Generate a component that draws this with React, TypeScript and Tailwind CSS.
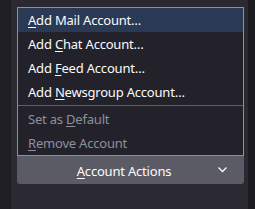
const items = [
  { pre: '', key: 'A', post: 'dd Mail Account…', active: true },
  { pre: 'Add ', key: 'C', post: 'hat Account…' },
  { pre: 'Add ', key: 'F', post: 'eed Account…' },
  { pre: 'Add ', key: 'N', post: 'ewsgroup Account…' },
];

const disabled = [
  { pre: 'Set as ', key: 'D', post: 'efault' },
  { pre: '', key: 'R', post: 'emove Account' },
];

function Label({ pre, k, post }: { pre: string; k: string; post: string }) {
  return (
    <span className="tracking-[-0.2px]">
      {pre}
      <span className="underline underline-offset-2">{k}</span>
      {post}
    </span>
  );
}

export default function App() {
  return (
    <div className="flex h-[209px] w-[255px] bg-[#1c1b22] text-[13px] font-['Noto_Sans',sans-serif] leading-none">
      <div className="w-[11px] shrink-0 bg-[#1f1e25]" />
      <div className="flex w-[237px] flex-col bg-[#2b2a33] pl-[6px] pr-[4px] pt-[7px]">
        <div className="border border-[#8f8f9d] bg-[#23222b]">
          {items.map((it, i) => (
            <div
              key={i}
              className={`flex h-[24px] items-center pl-[10px] text-[#fbfbfe] ${it.active ? 'bg-[#2a3a55]' : ''}`}
            >
              <Label pre={it.pre} k={it.key} post={it.post} />
            </div>
          ))}
          <div className="my-[1px] h-px bg-[#5f5e68]" />
          {disabled.map((it, i) => (
            <div key={i} className="flex h-[24px] items-center pl-[10px] text-[#8f8f9d]">
              <Label pre={it.pre} k={it.key} post={it.post} />
            </div>
          ))}
        </div>
        <button className="relative flex h-[28px] items-center justify-center rounded-b-[3px] bg-[#5b5b66] pr-[13px] pt-[2px] text-[#fbfbfe]">
          <span className="tracking-[-0.2px]">
            <span className="underline underline-offset-2">A</span>ccount Actions
          </span>
          <svg className="absolute right-[17px] top-[11px]" width="9" height="6" viewBox="0 0 9 6" fill="none">
            <path d="M0.5 0.5 L4.5 4.5 L8.5 0.5" stroke="#fbfbfe" strokeWidth="1.3" />
          </svg>
        </button>
      </div>
      <div className="flex-1 bg-[#1c1b22]" />
    </div>
  );
}
